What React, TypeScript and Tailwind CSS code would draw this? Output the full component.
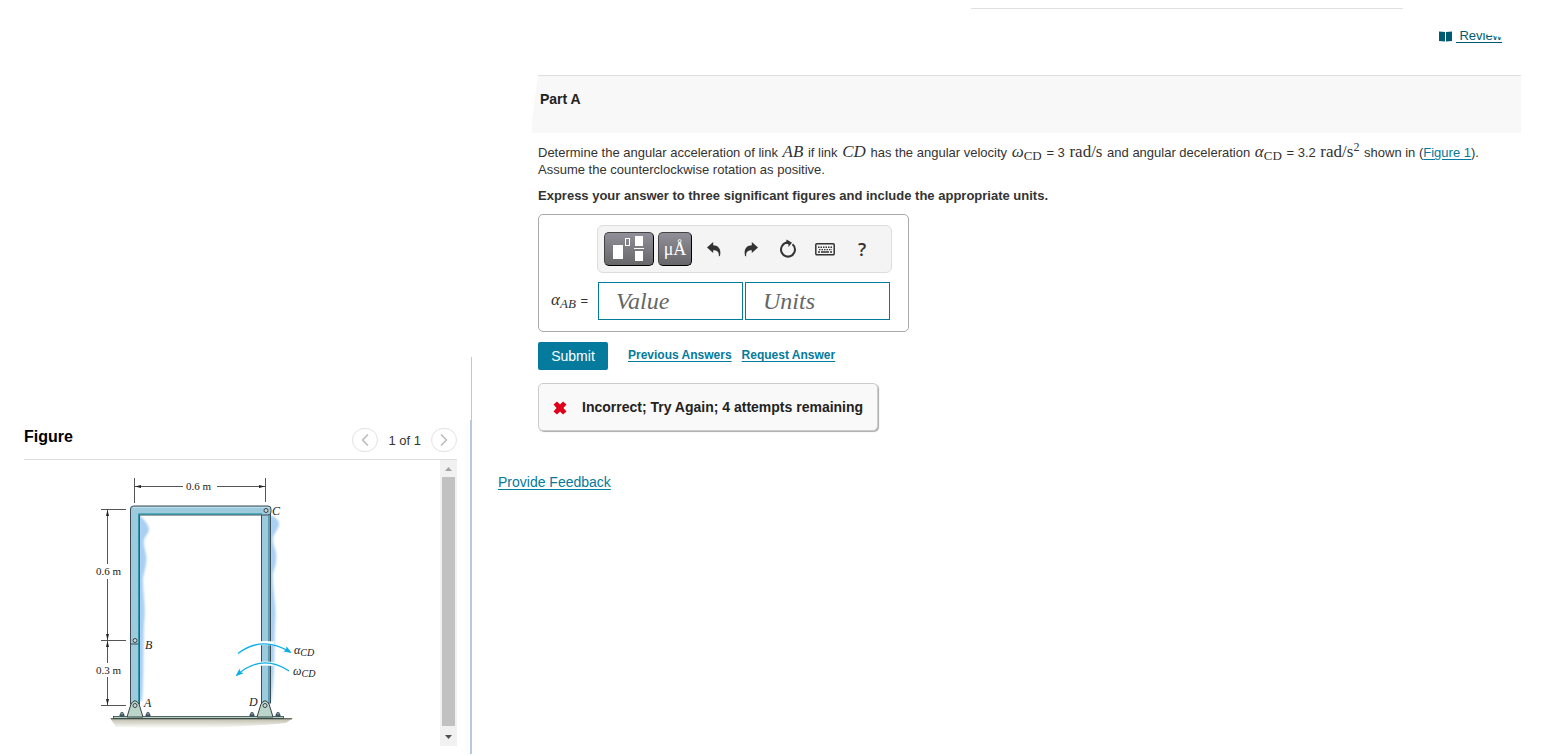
import { useState } from "react";
import type { ReactNode } from "react";
import { ChevronLeft, ChevronRight } from "lucide-react";

const LINK = "text-[#047a9c] underline underline-offset-2";

function MathText({ children }: { children: ReactNode }) {
  return (
    <span className="px-px font-['Liberation_Serif',serif] text-[17px] leading-none">{children}</span>
  );
}

function Sub({ children }: { children: ReactNode }) {
  return <span className="relative top-[3px] text-[13px]">{children}</span>;
}

function ToolButton({ label, children }: { label: string; children: ReactNode }) {
  return (
    <button
      type="button"
      aria-label={label}
      className="flex size-8 items-center justify-center rounded text-[#333] hover:bg-gray-200"
    >
      {children}
    </button>
  );
}

function TemplateIcon() {
  return (
    <svg viewBox="1 1 32 26" className="h-[26px] w-8" aria-hidden="true">
      <rect x="1" y="10" width="10" height="14" fill="#fff" />
      <rect x="13.5" y="3.5" width="4" height="7" fill="none" stroke="#fff" />
      <rect x="23" y="1" width="8" height="10" fill="#fff" />
      <rect x="22" y="13" width="10" height="1" fill="#fff" />
      <rect x="23" y="16" width="8" height="10" fill="#fff" />
    </svg>
  );
}

function UndoIcon({ flip = false }: { flip?: boolean }) {
  return (
    <svg viewBox="0 0 16 16" className={flip ? "h-4 w-4 -scale-x-100" : "h-4 w-4"} aria-hidden="true">
      <path
        d="M1 6.5 7.200 1v3.300c5 .2 8.300 3.400 6.800 10.500l-1.200.6c.4-4-1.200-6-5.600-6.100V12z"
        fill="currentColor"
      />
    </svg>
  );
}

function ResetIcon() {
  return (
    <svg viewBox="0 0 18 20" className="h-5 w-[18px]" aria-hidden="true">
      <path d="M13.500 5.200A7 7 0 1 1 8.600 3.600" fill="none" stroke="currentColor" strokeWidth="2" />
      <path d="M7.600.6 13 3.800 9.400 8V5L7 4.800z" fill="currentColor" />
    </svg>
  );
}

function KeyboardIcon() {
  return (
    <svg viewBox="0 0 20 14" className="h-[14px] w-5" aria-hidden="true">
      <rect x=".8" y="1.8" width="18.4" height="11" rx="1" fill="none" stroke="currentColor" strokeWidth="1.5" />
      <path d="M3 5.3h14M4 7.6h13" stroke="currentColor" strokeWidth="1.4" strokeDasharray="1.5 1" />
      <path d="M3 10h2M6 10h8M15 10h2" stroke="currentColor" strokeWidth="1.4" />
    </svg>
  );
}

function Bolt({ x }: { x: number }) {
  return (
    <g>
      <rect x={x - 2.5} y="714" width="5" height="3" rx="1" fill="#3f5661" />
      <circle cx={x} cy="713.8" r="1.5" fill="#7894a0" stroke="#31434b" strokeWidth=".7" />
    </g>
  );
}

function Pin({ x, y }: { x: number; y: number }) {
  return <circle cx={x} cy={y} r="2" fill="#cfd6d8" stroke="#39454a" strokeWidth="1" />;
}

function Support({ x }: { x: number }) {
  return (
    <g>
      <path
        d={`M${x - 8} 717 L${x - 4} 704 Q${x} 697.5 ${x + 4} 704 L${x + 8} 717 Z`}
        fill="#bcd5cb"
        stroke="#34443f"
        strokeWidth="1"
      />
      <Pin x={x} y={705.5} />
      <Bolt x={x - 13} />
      <Bolt x={x + 13} />
    </g>
  );
}

function LinkageDiagram() {
  return (
    <svg
      viewBox="80 470 250 260"
      className="h-[260px] w-[250px] font-['Liberation_Serif',serif]"
      role="img"
      aria-label="Linkage ABCD"
    >
      <defs>
        <linearGradient id="ground" x1="0" y1="0" x2="0" y2="1">
          <stop offset="0" stopColor="#b9b7a2" />
          <stop offset="1" stopColor="#fff" />
        </linearGradient>
        <filter id="soft" x="-50%" y="-5%" width="200%" height="110%">
          <feGaussianBlur stdDeviation=".9" />
        </filter>
        <marker id="dim" viewBox="0 0 6 4" refX="6" refY="2" markerWidth="6" markerHeight="4" markerUnits="userSpaceOnUse" orient="auto">
          <path d="M0 .5 6 2 0 3.5z" fill="#222" />
        </marker>
        <marker id="turn" viewBox="0 0 8 6" refX="6" refY="3" markerWidth="8" markerHeight="6" markerUnits="userSpaceOnUse" orient="auto">
          <path d="M0 0 8 3 0 6 1.5 3z" fill="#0aaeea" />
        </marker>
      </defs>

      <g fill="#a9cff2" filter="url(#soft)">
        <path d="M139 515c5 4 10 10 10 15-1 4-4 6-5 10-1 8 4 15 2 24-1 7-3 11-3 17 0 14 3 28 1 42-1 25 0 55-2 78h-3z" />
        <path d="M270 515c6 2 9 5 9 9 0 5-5 9-6 14-1 7 5 14 3 22 0 8-4 12-3 18 0 15 4 31 2 46-1 27 0 52-4 78h-1z" />
      </g>

      {/* ground */}
      <path d="M110 718h183l-7 5q-85 8-170 4z" fill="url(#ground)" />
      <rect x="113.5" y="716.5" width="170" height="2" fill="#b4cfc6" stroke="#34443f" strokeWidth=".8" />
      <path d="M111 718.8h181" stroke="#34443f" strokeWidth=".9" />

      {/* bars */}
      <rect x="261.5" y="509" width="9" height="194" fill="#9ecadd" stroke="#3e4d55" />
      <path d="M269 515v187" stroke="#438fa9" strokeWidth="1.5" />
      <rect x="130.5" y="638" width="9" height="66" fill="#9ecadd" stroke="#3e4d55" />
      <path
        d="M130.5 644V509q0-3 3-3H268q3 0 3 3v3q0 3-3 3H139.5v129z"
        fill="#9ecadd"
        stroke="#3e4d55"
      />
      <path d="M133 507.5h136" stroke="#bbdce8" strokeWidth="1" />
      <path d="M138.8 703V514H262" fill="none" stroke="#158b9c" strokeWidth="1.2" />
      <Pin x={135} y={640.5} />
      <Pin x={266} y={510.5} />
      <Support x={135} />
      <Support x={265} />

      {/* dimensions */}
      <g stroke="#555" fill="none">
        <path d="M134.5 478v25M265.5 478v24M101 509.5h25M101 640.5h25M101 705.5h25" />
        <path d="M183 486.5h-48" markerEnd="url(#dim)" />
        <path d="M217 486.5h48" markerEnd="url(#dim)" />
        <path d="M107.5 564v-54" markerEnd="url(#dim)" />
        <path d="M107.5 579v61" markerEnd="url(#dim)" />
        <path d="M107.5 663v-22" markerEnd="url(#dim)" />
        <path d="M107.5 677v28" markerEnd="url(#dim)" />
      </g>
      <g fill="#222" fontSize="11">
        <text x="186" y="490">0.6 m</text>
        <text x="96" y="575">0.6 m</text>
        <text x="96" y="674">0.3 m</text>
      </g>

      {/* rotation arrows */}
      <g fill="none">
        <path d="M257 643.5q8-1 17 0M257 664q8-1 17 0" stroke="#fff" strokeWidth="4" />
        <path d="M238 653.5Q262 635 290 652" stroke="#0aaeea" strokeWidth="1.3" markerEnd="url(#turn)" />
        <path d="M289 671Q262 653 237 675" stroke="#0aaeea" strokeWidth="1.3" markerEnd="url(#turn)" />
      </g>

      <g fill="#222" fontSize="12" fontStyle="italic">
        <text x="145" y="649">B</text>
        <text x="144" y="707">A</text>
        <text x="249" y="706">D</text>
        <text x="272" y="515">C</text>
        <text x="294" y="654">α<tspan dy="2" fontSize="10">CD</tspan></text>
        <text x="293" y="675">ω<tspan dy="2" fontSize="10">CD</tspan></text>
      </g>
    </svg>
  );
}

function FigurePanel() {
  return (
    <aside className="flex w-[472px] shrink-0 flex-col pt-[357px]">
      <div className="h-[63px] w-px self-end bg-[#b8c9db]" />
      <div className="border-r-2 border-[#b8c9db] pb-2 pl-6 pr-[13px]">
        <div className="flex h-10 items-center justify-between border-b border-[#ddd]">
          <h2 className="pb-[5px] text-base font-bold text-black">Figure</h2>
          <div className="flex items-center gap-[10px]">
            <button
              type="button"
              aria-label="Previous figure"
              className="flex h-6 w-[26px] items-center justify-center rounded-full border border-[#e2e2e2] text-[#bbb]"
            >
              <ChevronLeft className="size-5" />
            </button>
            <span className="pt-[2px] text-[13px] text-[#333]">1 of 1</span>
            <button
              type="button"
              aria-label="Next figure"
              className="flex h-6 w-[26px] items-center justify-center rounded-full border border-[#e2e2e2] text-[#bbb]"
            >
              <ChevronRight className="size-5" />
            </button>
          </div>
        </div>
        <div className="flex">
          <div className="flex-1 pb-4 pl-14 pt-[10px]">
            <LinkageDiagram />
          </div>
          <div className="flex w-[17px] flex-col items-center bg-[#f1f1f1]">
            <svg viewBox="0 0 17 17" className="size-[17px]" aria-hidden="true">
              <path d="M5 11h7L8.500 7z" fill="#a3a3a3" />
            </svg>
            <div className="w-[13px] flex-1 bg-[#c1c1c1]" />
            <svg viewBox="0 0 17 20" className="h-5 w-[17px]" aria-hidden="true">
              <path d="M5 9h7l-3.500 4z" fill="#505050" />
            </svg>
          </div>
        </div>
      </div>
    </aside>
  );
}

function AnswerBox() {
  const [value, setValue] = useState("");
  const [units, setUnits] = useState("");
  const field =
    "h-[38px] w-[145px] border border-[#047a9c] bg-white px-[17px] font-['Liberation_Serif',serif] text-2xl italic text-[#333] outline-none placeholder:text-[#666]";

  return (
    <div className="flex w-fit items-end rounded-[5px] border border-[#aaa] pb-[11px] pl-[11px] pr-4 pt-[10px]">
      <label htmlFor="value" className="w-12 pb-[9px] text-[13px] leading-5">
        <MathText>
          <i>
            α<Sub>AB</Sub>
          </i>
        </MathText>{" "}
        =
      </label>
      <div>
        <div className="-ml-px flex h-12 items-center rounded-md border border-[#ddd] bg-[#f4f4f4] pl-[6px]">
          <button
            type="button"
            aria-label="Templates"
            className="mr-1 flex h-[34px] w-[50px] items-center justify-center rounded-[5px] border border-b-black border-r-black border-[#444] bg-gradient-to-b from-[#918f98] to-[#67676a]"
          >
            <TemplateIcon />
          </button>
          <button
            type="button"
            className="mr-[6px] h-[34px] w-[34px] rounded-[5px] border border-b-black border-r-black border-[#444] bg-gradient-to-b from-[#918f98] to-[#67676a] pt-px font-['Liberation_Serif',serif] text-[18px] text-white"
          >
            μÅ
          </button>
          <div className="flex gap-[5px]">
            <ToolButton label="Undo">
              <UndoIcon />
            </ToolButton>
            <ToolButton label="Redo">
              <UndoIcon flip />
            </ToolButton>
            <ToolButton label="Reset">
              <ResetIcon />
            </ToolButton>
            <ToolButton label="Keyboard shortcuts">
              <KeyboardIcon />
            </ToolButton>
            <ToolButton label="Help">
              <span className="font-['Open_Sans',sans-serif] text-[18px] font-semibold">?</span>
            </ToolButton>
          </div>
        </div>
        <div className="mr-[2px] mt-[9px] flex gap-[2px]">
          <input
            id="value"
            value={value}
            onChange={(e) => setValue(e.target.value)}
            placeholder="Value"
            className={field}
          />
          <input
            aria-label="Units"
            value={units}
            onChange={(e) => setUnits(e.target.value)}
            placeholder="Units"
            className={field}
          />
        </div>
      </div>
    </div>
  );
}

export default function App() {
  return (
    <div className="flex bg-white font-['Liberation_Sans',Arial,sans-serif] text-[13px] text-[#333]">
      <FigurePanel />

      <main className="min-w-0 flex-1 pl-[26px] pr-[25px] pt-2">
        <div className="ml-auto mr-[118px] h-px w-[432px] bg-[#e0e0e0]" />
        <div className="flex justify-end pr-[19px] pt-5">
          <a href="#review" className="flex items-center gap-1 text-[#005a70]">
            <svg viewBox="0 0 13 11" className="h-[11px] w-[13px]" aria-hidden="true">
              <path d="M0 .5 6 1v9.500L0 10zM13 .5 7 1v9.500L13 10z" fill="currentColor" />
            </svg>
            <span className="border-b border-[#005a70] pl-[3px] leading-[13px]">
              <span className="block [clip-path:polygon(0_0,50%_0,62%_40%,100%_66%,100%_100%,0_100%)]">
                Review
              </span>
            </span>
          </a>
        </div>

        <section className="pl-10 pt-8">
          <header className="-ml-[6px] h-[58px] border-t border-[#ddd] bg-[#f8f8f8] pl-2 pt-[13px] [clip-path:polygon(6px_0,100%_0,100%_100%,0_100%,0_80%)]">
            <h1 className="text-[14px] font-bold leading-5 text-[#222]">Part A</h1>
          </header>

          <p className="pt-[10px] leading-[17px]">
            Determine the angular acceleration of link{" "}
            <MathText>
              <i>AB</i>
            </MathText>{" "}
            if link{" "}
            <MathText>
              <i>CD</i>
            </MathText>{" "}
            has the angular velocity{" "}
            <MathText>
              <i>ω</i>
              <Sub>CD</Sub>
            </MathText>{" "}
            = 3 <MathText>rad/s</MathText> and angular deceleration{" "}
            <MathText>
              <i>α</i>
              <Sub>CD</Sub>
            </MathText>{" "}
            = 3.2{" "}
            <MathText>
              rad/s<span className="relative -top-[6px] text-[12px]">2</span>
            </MathText>{" "}
            shown in (
            <a href="#figure" className={LINK}>
              Figure 1
            </a>
            ).
            <br />
            Assume the counterclockwise rotation as positive.
          </p>
          <p className="mb-[10px] mt-[9px] font-bold leading-[17px]">
            Express your answer to three significant figures and include the appropriate units.
          </p>

          <AnswerBox />

          <div className="mt-[10px] flex items-center">
            <button type="button" className="h-7 w-[70px] rounded-[2px] bg-[#047a9c] text-[14px] text-white">
              Submit
            </button>
            <div className="flex gap-[10px] pb-[2px] pl-5 text-[12px] font-bold">
              <a href="#previous" className={LINK}>
                Previous Answers
              </a>
              <a href="#request" className={LINK}>
                Request Answer
              </a>
            </div>
          </div>

          <div
            role="status"
            className="mt-[13px] flex h-12 w-fit items-center gap-[15px] rounded-[5px] border border-[#ccc] bg-[#f9f9f9] px-[14px] pt-px text-[14px] font-bold text-[#222] shadow-[1px_1px_1px_#aaa]"
          >
            <svg viewBox="0 0 14 14" className="size-[14px]" aria-hidden="true">
              <path
                d="M4 .5 7 3.600 10 .5 13.500 3.500 10.400 7l3.100 3.500L10 13.500 7 10.400 4 13.500.5 10.500 3.600 7 .5 3.500z"
                fill="#e0001b"
              />
            </svg>
            Incorrect; Try Again; 4 attempts remaining
          </div>
        </section>

        <a href="#feedback" className={`mt-[41px] inline-block text-[14px] ${LINK}`}>
          Provide Feedback
        </a>
      </main>
    </div>
  );
}
